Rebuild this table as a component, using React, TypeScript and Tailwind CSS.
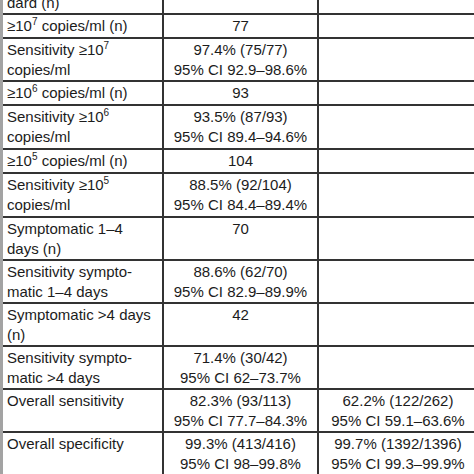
import React from "react"

type Row = {
  label: React.ReactNode
  a?: React.ReactNode
  b?: React.ReactNode
  h: string
}

const Sup = ({ children }: { children: React.ReactNode }) => (
  <sup className="text-[10px] -top-[6px]">{children}</sup>
)

const rows: Row[] = [
  { label: <>Reference stan-<br />dard (n)</>, a: "113", b: "262", h: "h-[43px]" },
  { label: <>≥10<Sup>7</Sup> copies/ml (n)</>, a: "77", h: "h-[24px]" },
  {
    label: <>Sensitivity ≥10<Sup>7</Sup><br />copies/ml</>,
    a: <>97.4% (75/77)<br />95% CI 92.9–98.6%</>,
    h: "h-[43px]",
  },
  { label: <>≥10<Sup>6</Sup> copies/ml (n)</>, a: "93", h: "h-[24px]" },
  {
    label: <>Sensitivity ≥10<Sup>6</Sup><br />copies/ml</>,
    a: <>93.5% (87/93)<br />95% CI 89.4–94.6%</>,
    h: "h-[44px]",
  },
  { label: <>≥10<Sup>5</Sup> copies/ml (n)</>, a: "104", h: "h-[24px]" },
  {
    label: <>Sensitivity ≥10<Sup>5</Sup><br />copies/ml</>,
    a: <>88.5% (92/104)<br />95% CI 84.4–89.4%</>,
    h: "h-[44px]",
  },
  { label: <>Symptomatic 1–4<br />days (n)</>, a: "70", h: "h-[43px]" },
  {
    label: <>Sensitivity sympto-<br />matic 1–4 days</>,
    a: <>88.6% (62/70)<br />95% CI 82.9–89.9%</>,
    h: "h-[43px]",
  },
  { label: <>Symptomatic &gt;4 days<br />(n)</>, a: "42", h: "h-[42px]" },
  {
    label: <>Sensitivity sympto-<br />matic &gt;4 days</>,
    a: <>71.4% (30/42)<br />95% CI 62–73.7%</>,
    h: "h-[43px]",
  },
  {
    label: "Overall sensitivity",
    a: <>82.3% (93/113)<br />95% CI 77.7–84.3%</>,
    b: <>62.2% (122/262)<br />95% CI 59.1–63.6%</>,
    h: "h-[43px]",
  },
  {
    label: "Overall specificity",
    a: <>99.3% (413/416)<br />95% CI 98–99.8%</>,
    b: <>99.7% (1392/1396)<br />95% CI 99.3–99.9%</>,
    h: "h-[43px]",
  },
]

export default function App() {
  return (
    <div className="w-[474px] h-[474px] overflow-hidden bg-white">
      <table
        className="-mt-[28px] w-[478px] table-fixed border-separate border-spacing-0 border-l-[3px] border-l-[#a3a3a3] text-[15px] leading-[20px] text-[#1c1c1c]"
        style={{ fontFamily: '"Liberation Sans", Arial, sans-serif' }}
      >
        <colgroup>
          <col className="w-[161px]" />
          <col className="w-[155px]" />
          <col className="w-[160px]" />
        </colgroup>
        <tbody>
          {rows.map((r, i) => (
            <tr key={i} className={r.h}>
              <td className="border-b-2 border-r-2 border-[#333333] pl-1 pt-px align-top whitespace-nowrap">
                {r.label}
              </td>
              <td className="border-b-2 border-r-2 border-[#333333] pt-px align-top text-center whitespace-nowrap">
                {r.a}
              </td>
              <td className="border-b-2 border-r-2 border-[#333333] pt-px align-top text-center whitespace-nowrap">
                {r.b}
              </td>
            </tr>
          ))}
        </tbody>
      </table>
    </div>
  )
}
